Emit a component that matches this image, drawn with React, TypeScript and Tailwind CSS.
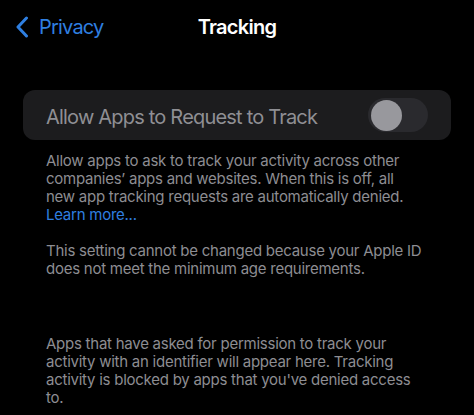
import React from "react";

const font = { fontFamily: "Inter, 'Noto Sans', 'Liberation Sans', sans-serif" };

function Chevron() {
  return (
    <svg width="14" height="22" viewBox="0 0 14 22" fill="none">
      <path d="M11.5 2 L3 11 L11.5 20" stroke="#2f7fe0" strokeWidth="3" strokeLinecap="round" strokeLinejoin="round" />
    </svg>
  );
}

function Toggle() {
  return (
    <div className="w-[60px] h-[34px] rounded-full bg-[#2a2a2e] flex items-center pl-[3px]">
      <div className="w-[31px] h-[31px] rounded-full bg-[#98989d]" />
    </div>
  );
}

export default function App() {
  return (
    <div className="w-[474px] h-[415px] bg-black overflow-hidden" style={font}>
      <div className="relative h-[54px] flex items-center">
        <div className="flex items-center pl-[15px] gap-[10px]">
          <Chevron />
          <span className="text-[20px] text-[#2f7fe0] tracking-[-0.8px]">Privacy</span>
        </div>
        <span className="absolute left-0 right-0 text-center text-[20px] font-semibold text-white tracking-[-0.7px]">
          Tracking
        </span>
      </div>
      <div className="mt-[36px] mx-[23px] h-[50px] rounded-[12px] bg-[#1c1c1e] flex items-center justify-between pl-[23px] pr-[23px]">
        <span className="text-[20px] text-[#8f8f94] tracking-[-0.8px] pt-[3px]">Allow Apps to Request to Track</span>
        <Toggle />
      </div>
      <div className="pl-[46px] pr-[20px] text-[15px] leading-[18px] text-[#8d8d92] tracking-[-0.25px]">
        <p className="mt-[12px]">
          <span className="block whitespace-nowrap">Allow apps to ask to track your activity across other</span>
          <span className="block whitespace-nowrap">companies’ apps and websites. When this is off, all</span>
          <span className="block whitespace-nowrap">new app tracking requests are automatically denied.</span>
          <span className="block whitespace-nowrap text-[#2f7fe0]">Learn more...</span>
        </p>
        <p className="mt-[18px]">
          <span className="block whitespace-nowrap">This setting cannot be changed because your Apple ID</span>
          <span className="block whitespace-nowrap">does not meet the minimum age requirements.</span>
        </p>
        <p className="mt-[57px]">
          <span className="block whitespace-nowrap">Apps that have asked for permission to track your</span>
          <span className="block whitespace-nowrap">activity with an identifier will appear here. Tracking</span>
          <span className="block whitespace-nowrap">activity is blocked by apps that you've denied access</span>
          <span className="block whitespace-nowrap">to.</span>
        </p>
      </div>
    </div>
  );
}
